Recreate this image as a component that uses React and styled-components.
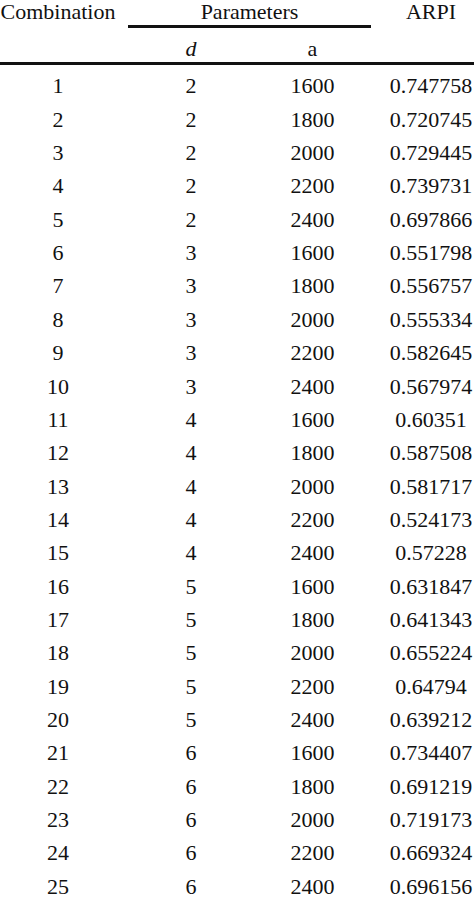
import React from "react";
import styled, { createGlobalStyle } from "styled-components";

const Global = createGlobalStyle`
  html, body {
    margin: 0;
    padding: 0;
    background: #ffffff;
  }
  body {
    width: 474px;
    height: 906px;
    overflow: hidden;
    font-family: "Liberation Serif", "Times New Roman", serif;
    color: #111111;
  }
`;

const COLS = "128px 126px 117px 120px";

const Table = styled.div`
  width: 491px;
  font-size: 22px;
  font-family: "Liberation Serif", "Times New Roman", serif;
  color: #111111;
`;

const Head = styled.div`
  display: grid;
  grid-template-columns: ${COLS};
  border-bottom: 3px solid #111111;
`;

const HeadCell = styled.div`
  line-height: 24.4px;
  text-align: center;
  padding-right: ${(p) => (p.$first ? "12px" : "0")};
`;

const GroupCell = styled.div`
  grid-column: 2 / 4;
  line-height: 24.4px;
  text-align: center;
  padding-bottom: 1px;
  border-bottom: 3px solid #111111;
`;

const SubCell = styled.div`
  line-height: 24px;
  text-align: center;
  padding: 9px 0 1px;
  font-style: ${(p) => (p.$italic ? "italic" : "normal")};
`;

const Body = styled.div`
  padding-top: 4px;
`;

const Row = styled.div`
  display: grid;
  grid-template-columns: ${COLS};
  line-height: 33.35px;
`;

const Cell = styled.div`
  text-align: center;
  padding-right: ${(p) => (p.$first ? "12px" : "0")};
  white-space: nowrap;
`;

const rows = [
  [2, 1600, "0.747758"],
  [2, 1800, "0.720745"],
  [2, 2000, "0.729445"],
  [2, 2200, "0.739731"],
  [2, 2400, "0.697866"],
  [3, 1600, "0.551798"],
  [3, 1800, "0.556757"],
  [3, 2000, "0.555334"],
  [3, 2200, "0.582645"],
  [3, 2400, "0.567974"],
  [4, 1600, "0.60351"],
  [4, 1800, "0.587508"],
  [4, 2000, "0.581717"],
  [4, 2200, "0.524173"],
  [4, 2400, "0.57228"],
  [5, 1600, "0.631847"],
  [5, 1800, "0.641343"],
  [5, 2000, "0.655224"],
  [5, 2200, "0.64794"],
  [5, 2400, "0.639212"],
  [6, 1600, "0.734407"],
  [6, 1800, "0.691219"],
  [6, 2000, "0.719173"],
  [6, 2200, "0.669324"],
  [6, 2400, "0.696156"],
];

export default function App() {
  return (
    <>
      <Global />
      <Table>
        <Head>
          <HeadCell $first>Combination</HeadCell>
          <GroupCell>Parameters</GroupCell>
          <HeadCell>ARPI</HeadCell>
          <SubCell />
          <SubCell $italic>d</SubCell>
          <SubCell>a</SubCell>
          <SubCell />
        </Head>
        <Body>
          {rows.map(([d, a, v], i) => (
            <Row key={i}>
              <Cell $first>{i + 1}</Cell>
              <Cell>{d}</Cell>
              <Cell>{a}</Cell>
              <Cell>{v}</Cell>
            </Row>
          ))}
        </Body>
      </Table>
    </>
  );
}
